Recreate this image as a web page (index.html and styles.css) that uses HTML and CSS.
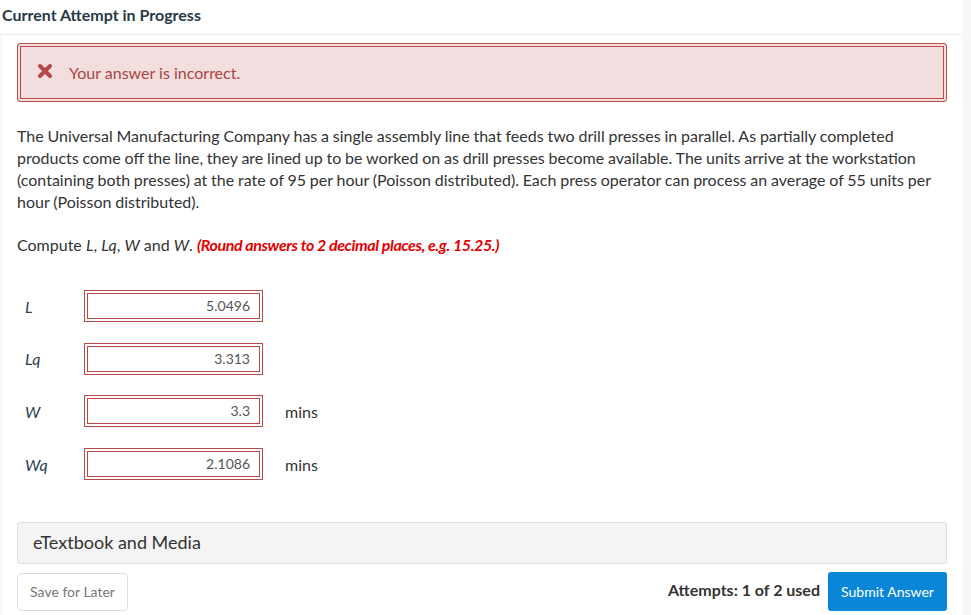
FILE: index.html
```html
<!DOCTYPE html>
<html>
<head>
<meta charset="utf-8">
<link rel="stylesheet" href="styles.css">
</head>
<body>
<div class="page">
  <div class="main">
    <div class="header">Current Attempt in Progress</div>
    <div class="content">
      <div class="alert">
        <svg class="x-icon" viewBox="0 0 16 16" width="16" height="16"><path d="M3 3 L13 13 M13 3 L3 13" stroke="#b5494a" stroke-width="4" stroke-linecap="round"/></svg>
        <span>Your answer is incorrect.</span>
      </div>
      <p class="question">The Universal Manufacturing Company has a single assembly line that feeds two drill presses in parallel. As partially completed products come off the line, they are lined up to be worked on as drill presses become available. The units arrive at the workstation (containing both presses) at the rate of 95 per hour (Poisson distributed). Each press operator can process an average of 55 units per hour (Poisson distributed).</p>
      <p class="compute">Compute <i>L</i>, <i>Lq</i>, <i>W</i> and <i>W</i>. <span class="round">(Round answers to 2 decimal places, e.g. 15.25.)</span></p>
      <div class="answers">
        <div class="row"><span class="label">L</span><div class="field">5.0496</div></div>
        <div class="row"><span class="label">Lq</span><div class="field">3.313</div></div>
        <div class="row"><span class="label">W</span><div class="field">3.3</div><span class="unit">mins</span></div>
        <div class="row"><span class="label">Wq</span><div class="field">2.1086</div><span class="unit">mins</span></div>
      </div>
      <div class="media">eTextbook and Media</div>
      <div class="footer">
        <button class="save">Save for Later</button>
        <div class="right">
          <span class="attempts">Attempts: 1 of 2 used</span>
          <button class="submit">Submit Answer</button>
        </div>
      </div>
    </div>
  </div>
  <div class="side"></div>
</div>
</body>
</html>
```
FILE: styles.css
```css
* { box-sizing: border-box; }
html, body { margin: 0; padding: 0; background: #fff; }
body { font-family: Lato, "Open Sans", sans-serif; color: #333; }
.page { display: flex; height: 615px; overflow: hidden; }
.main { width: 962px; flex: none; }
.side { flex: 1; background: #f8f8f8; }
.header {
  height: 35px;
  padding: 5px 0 0 2px;
  font-size: 16px;
  font-weight: bold;
  color: #283846;
  border-bottom: 1px solid #ececec;
}
.content {
  border-left: 2px solid #f8f8f8;
  padding: 8px 15px 0 15px;
  height: 580px;
}
.alert {
  height: 59px;
  background: #f2dede;
  border: 1px solid #b94a48;
  border-radius: 3px;
  box-shadow: inset 0 0 0 2px #f2dede, inset 0 0 0 3px #b94a48;
  display: flex;
  align-items: center;
  padding-left: 19px;
  color: #a94442;
  font-size: 16px;
}
.alert .x-icon { margin-right: 16px; position: relative; top: -2px; }
.question {
  margin: 23px 0 21px;
  font-size: 16px;
  line-height: 22px;
  color: #333;
  word-spacing: -0.3px;
}
.compute { margin: 0; font-size: 16px; line-height: 22px; }
.round { color: #e30000; font-weight: bold; font-style: italic; letter-spacing: -0.4px; }
.answers { margin-top: 34px; display: flex; flex-direction: column; gap: 20.7px; }
.row { display: flex; align-items: center; height: 32px; }
.label { width: 67px; padding-left: 8px; font-style: italic; font-size: 16px; color: #2d4050; }
.field {
  width: 179px;
  height: 32px;
  border: 1px solid #b94a48;
  box-shadow: inset 0 0 0 2px #fff, inset 0 0 0 3px #b94a48;
  text-align: right;
  padding-right: 12px;
  line-height: 30px;
  font-size: 14px;
  color: #555;
}
.unit { margin-left: 22px; font-size: 16px; color: #333; }
.media {
  margin-top: 42px;
  height: 42px;
  background: #f4f4f4;
  border: 1px solid #dedede;
  border-radius: 3px;
  padding-left: 15px;
  line-height: 39px;
  font-size: 18px;
  color: #333;
}
.footer { margin-top: 8px; display: flex; justify-content: space-between; align-items: center; }
.save {
  width: 111px; height: 38px;
  background: #fff;
  border: 1px solid #dcdcdc;
  border-radius: 4px;
  font-family: Lato, sans-serif;
  font-size: 14px;
  color: #767676;
  padding: 0;
}
.right { display: flex; align-items: center; }
.attempts { font-size: 16px; font-weight: bold; color: #333; margin-right: 8px; position: relative; top: -2px; }
.submit {
  width: 119px; height: 39px;
  background: #0a86d8;
  border: none;
  border-radius: 3px;
  color: #fff;
  font-family: Lato, sans-serif;
  font-size: 14px;
  padding: 0;
}
```
